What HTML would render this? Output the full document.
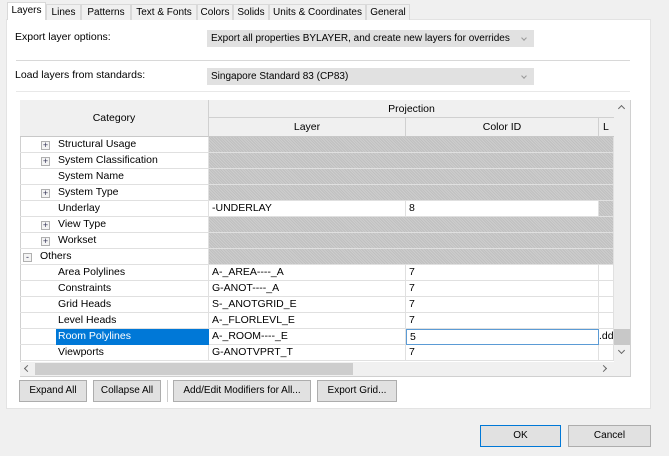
<!DOCTYPE html><html><head><style>
*{margin:0;padding:0;box-sizing:border-box}
body{width:669px;height:456px;background:#f0f0f0;font-family:"Liberation Sans",sans-serif;font-size:10.5px;color:#000;position:relative;overflow:hidden}
div{white-space:nowrap}
.a{position:absolute}
.tab{position:absolute;top:4px;height:16px;line-height:15px;text-align:center;border:1px solid #d9d9d9;border-bottom:none;background:#f0f0f0;font-size:10px;overflow:hidden}
.panel{position:absolute;left:6px;top:19px;width:645px;height:390px;background:#fff;border:1px solid #e3e3e3}
.dd{position:absolute;left:207px;width:327px;height:17px;background:#e1e1e1;line-height:17px;padding-left:4px;font-size:10px}
.arr{position:absolute;right:8px;top:6px;width:4px;height:4px;border-right:1px solid #999;border-bottom:1px solid #999;transform:rotate(45deg)}
.hatch{background:#c8c8c8 repeating-linear-gradient(45deg,#c0c0c0 0 1px,#cdcdcd 1px 2px)}
.cell{position:absolute;height:16px;border-right:1px solid #e0e0e0;border-bottom:1px solid #e0e0e0;line-height:15px;padding-left:3px}
.btn{position:absolute;top:380px;height:22px;background:#e1e1e1;border:1px solid #adadad;text-align:center;line-height:20px;font-size:10px}
.pm{position:absolute;width:9px;height:9px;border:1px solid #b0b0b0;background:#f4f4f4;font-size:9px;line-height:7px;text-align:center;color:#335}
</style></head><body>
<div class="panel"></div>
<div class="tab" style="left:7px;width:39px;top:2px;height:18px;background:#fff">Layers</div>
<div class="tab" style="left:46px;width:35px">Lines</div>
<div class="tab" style="left:81px;width:50px">Patterns</div>
<div class="tab" style="left:131px;width:66px">Text &amp; Fonts</div>
<div class="tab" style="left:197px;width:36px">Colors</div>
<div class="tab" style="left:233px;width:36px">Solids</div>
<div class="tab" style="left:269px;width:97px">Units &amp; Coordinates</div>
<div class="tab" style="left:366px;width:44px">General</div>
<div class="a" style="left:15px;top:31px">Export layer options:</div>
<div class="dd" style="top:30px">Export all properties BYLAYER, and create new layers for overrides<span class="arr"></span></div>
<div class="a" style="left:16px;top:60px;width:614px;height:1px;background:#d8d8d8"></div>
<div class="a" style="left:15px;top:69px">Load layers from standards:</div>
<div class="dd" style="top:68px">Singapore Standard 83 (CP83)<span class="arr"></span></div>
<div class="a" style="left:16px;top:91px;width:614px;height:1px;background:#e8e8e8"></div>
<div class="a" style="left:20px;top:100px;width:611px;height:277px;border:1px solid #d0d0d0;background:#fff"></div>
<div class="a" style="left:20px;top:100px;width:189px;height:37px;background:#f0f0f0;border-right:1px solid #d0d0d0;border-bottom:1px solid #c8c8c8;text-align:center;line-height:37px">Category</div>
<div class="a" style="left:209px;top:100px;width:405px;height:18px;background:#f0f0f0;border-bottom:1px solid #d0d0d0;text-align:center;line-height:18px">Projection</div>
<div class="a" style="left:209px;top:118px;width:197px;height:19px;background:#f0f0f0;border-right:1px solid #d0d0d0;border-bottom:1px solid #c8c8c8;text-align:center;line-height:19px">Layer</div>
<div class="a" style="left:406px;top:118px;width:193px;height:19px;background:#f0f0f0;border-right:1px solid #d0d0d0;border-bottom:1px solid #c8c8c8;text-align:center;line-height:19px">Color ID</div>
<div class="a" style="left:599px;top:118px;width:15px;height:19px;background:#f0f0f0;border-bottom:1px solid #c8c8c8;line-height:19px;padding-left:4px;overflow:hidden">L</div>
<div class="a" style="left:614px;top:100px;width:16px;height:262px;background:#f0f0f0"></div>
<div class="a" style="left:619px;top:106px;width:5px;height:5px;border-left:1px solid #666;border-top:1px solid #666;transform:rotate(45deg)"></div>
<div class="a" style="left:619px;top:348px;width:5px;height:5px;border-right:1px solid #666;border-bottom:1px solid #666;transform:rotate(45deg)"></div>
<div class="a" style="left:20px;top:362px;width:610px;height:14px;background:#f0f0f0"></div>
<div class="a" style="left:35px;top:363px;width:318px;height:12px;background:#cdcdcd"></div>
<div class="a" style="left:25px;top:366px;width:5px;height:5px;border-left:1px solid #666;border-bottom:1px solid #666;transform:rotate(45deg)"></div>
<div class="a" style="left:601px;top:366px;width:5px;height:5px;border-right:1px solid #666;border-top:1px solid #666;transform:rotate(45deg)"></div>
<div class="cell" style="left:20px;top:137px;width:189px;padding-left:38px">Structural Usage</div><div class="pm" style="left:41px;top:141px">+</div><div class="cell hatch" style="left:209px;top:137px;width:405px"></div>
<div class="cell" style="left:20px;top:153px;width:189px;padding-left:38px">System Classification</div><div class="pm" style="left:41px;top:157px">+</div><div class="cell hatch" style="left:209px;top:153px;width:405px"></div>
<div class="cell" style="left:20px;top:169px;width:189px;padding-left:38px">System Name</div><div class="cell hatch" style="left:209px;top:169px;width:405px"></div>
<div class="cell" style="left:20px;top:185px;width:189px;padding-left:38px">System Type</div><div class="pm" style="left:41px;top:189px">+</div><div class="cell hatch" style="left:209px;top:185px;width:405px"></div>
<div class="cell" style="left:20px;top:201px;width:189px;padding-left:38px">Underlay</div><div class="cell" style="left:209px;top:201px;width:197px">-UNDERLAY</div><div class="cell" style="left:406px;top:201px;width:193px">8</div><div class="cell hatch" style="left:599px;top:201px;width:15px"></div>
<div class="cell" style="left:20px;top:217px;width:189px;padding-left:38px">View Type</div><div class="pm" style="left:41px;top:221px">+</div><div class="cell hatch" style="left:209px;top:217px;width:405px"></div>
<div class="cell" style="left:20px;top:233px;width:189px;padding-left:38px">Workset</div><div class="pm" style="left:41px;top:237px">+</div><div class="cell hatch" style="left:209px;top:233px;width:405px"></div>
<div class="cell" style="left:20px;top:249px;width:189px;padding-left:20px">Others</div><div class="pm" style="left:23px;top:253px">-</div><div class="cell hatch" style="left:209px;top:249px;width:405px"></div>
<div class="cell" style="left:20px;top:265px;width:189px;padding-left:38px">Area Polylines</div><div class="cell" style="left:209px;top:265px;width:197px">A-_AREA----_A</div><div class="cell" style="left:406px;top:265px;width:193px">7</div><div class="cell" style="left:599px;top:265px;width:15px"></div>
<div class="cell" style="left:20px;top:281px;width:189px;padding-left:38px">Constraints</div><div class="cell" style="left:209px;top:281px;width:197px">G-ANOT----_A</div><div class="cell" style="left:406px;top:281px;width:193px">7</div><div class="cell" style="left:599px;top:281px;width:15px"></div>
<div class="cell" style="left:20px;top:297px;width:189px;padding-left:38px">Grid Heads</div><div class="cell" style="left:209px;top:297px;width:197px">S-_ANOTGRID_E</div><div class="cell" style="left:406px;top:297px;width:193px">7</div><div class="cell" style="left:599px;top:297px;width:15px"></div>
<div class="cell" style="left:20px;top:313px;width:189px;padding-left:38px">Level Heads</div><div class="cell" style="left:209px;top:313px;width:197px">A-_FLORLEVL_E</div><div class="cell" style="left:406px;top:313px;width:193px">7</div><div class="cell" style="left:599px;top:313px;width:15px"></div>
<div class="cell" style="left:20px;top:329px;width:189px"></div><div class="a" style="left:56px;top:329px;width:153px;height:16px;background:#0078d7;color:#fff;line-height:15px;padding-left:2px">Room Polylines</div><div class="cell" style="left:209px;top:329px;width:197px">A-_ROOM----_E</div><div class="cell" style="left:406px;top:329px;width:193px;border:1px solid #5b9bd5">5</div><div class="cell" style="left:599px;top:329px;width:15px;overflow:hidden;padding-left:0">.dd</div><div class="a" style="left:614px;top:329px;width:16px;height:16px;background:#c8c8c8"></div>
<div class="cell" style="left:20px;top:345px;width:189px;padding-left:38px">Viewports</div><div class="cell" style="left:209px;top:345px;width:197px">G-ANOTVPRT_T</div><div class="cell" style="left:406px;top:345px;width:193px">7</div><div class="cell" style="left:599px;top:345px;width:15px"></div>
<div class="btn" style="left:19px;width:68px">Expand All</div>
<div class="btn" style="left:93px;width:68px">Collapse All</div>
<div class="a" style="left:167px;top:380px;width:1px;height:22px;background:#ccc"></div>
<div class="btn" style="left:173px;width:138px">Add/Edit Modifiers for All...</div>
<div class="btn" style="left:317px;width:80px">Export Grid...</div>
<div class="btn" style="left:480px;top:425px;width:81px;border:1px solid #0078d7">OK</div>
<div class="btn" style="left:568px;top:425px;width:83px">Cancel</div>
</body></html>
